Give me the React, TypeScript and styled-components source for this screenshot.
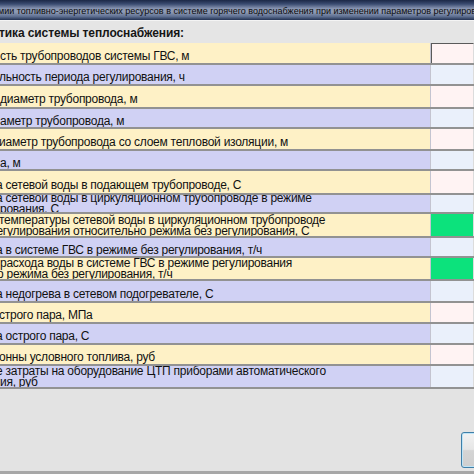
import React from "react";
import styled, { createGlobalStyle } from "styled-components";

const Global = createGlobalStyle`
  html, body { margin: 0; padding: 0; background: #e3e3e3; overflow: hidden; }
  #root { width: 474px; height: 474px; }
`;

const Window = styled.div`
  width: 474px;
  height: 474px;
  display: flex;
  flex-direction: column;
  overflow: hidden;
  font-family: "Liberation Sans", Arial, sans-serif;
  background: #e3e3e3;
`;

const TitleBar = styled.div`
  height: 20px;
  flex: none;
  display: flex;
  align-items: center;
  white-space: nowrap;
  overflow: hidden;
  font-size: 9px;
  color: #0c0c0c;
  background: linear-gradient(
    180deg,
    #1c2846 0%,
    #3a4b70 20%,
    #8693b0 42%,
    #909cb6 60%,
    #5f7092 82%,
    #223152 100%
  );
`;

const TitleText = styled.span`
  text-indent: -2px;
  display: block;
  padding-top: 1px;
`;

const Header = styled.div`
  height: 23px;
  flex: none;
  border-top: 1px solid #f4f4f4;
  background: #e5e5e5;
  display: flex;
  align-items: center;
  font-size: 12px;
  font-weight: bold;
  letter-spacing: -0.1px;
  color: #161616;
  white-space: nowrap;
  padding-top: 1px;
  box-sizing: border-box;
`;

const Table = styled.div`
  display: flex;
  flex-direction: column;
  flex: none;
`;

const Row = styled.div<{ $h: number; $tone: "y" | "b" }>`
  height: ${(p) => p.$h}px;
  box-sizing: border-box;
  display: grid;
  grid-template-columns: 431px 1fr;
  border-bottom: 2px solid #929292;
  background: ${(p) => (p.$tone === "y" ? "#fef1c6" : "#d0d1f4")};
`;

const Label = styled.div<{ $multi: boolean }>`
  display: flex;
  flex-direction: column;
  justify-content: center;
  overflow: hidden;
  font-size: 12px;
  letter-spacing: -0.25px;
  color: #111;
  white-space: nowrap;
  border-right: 1px solid #c4c4d0;
  padding-top: ${(p) => (p.$multi ? 1 : 5)}px;
  line-height: ${(p) => (p.$multi ? 11 : 12)}px;
  box-sizing: border-box;
`;

const Line = styled.span<{ $indent: number }>`
  display: block;
  text-indent: ${(p) => p.$indent}px;
`;

const Cell = styled.div<{ $tone: "y" | "b"; $green?: boolean; $first?: boolean }>`
  background: ${(p) =>
    p.$green ? "#0ce27c" : p.$tone === "y" ? "#fff3f3" : "#eaf0fb"};
  border-top: ${(p) => (p.$first ? "1px solid #5a5a5a" : "none")};
  border-left: ${(p) => (p.$first ? "1px solid #5a5a5a" : "none")};
  border-right: 1px solid #dcdcdc;
`;

const Footer = styled.div`
  flex: 1;
  display: flex;
  justify-content: flex-end;
  align-items: flex-end;
  padding-bottom: 3px;
  border-bottom: 3px solid #a7a7a7;
`;

const Button = styled.button`
  width: 80px;
  height: 36px;
  margin-right: -67px;
  border: 1px solid #3f7fa8;
  border-radius: 3px;
  background: linear-gradient(180deg, #f2f2f2 0%, #e6e6e6 48%, #d4d4d4 52%, #cfcfcf 100%);
  box-shadow: inset 0 0 0 1px #bfe4f6;
`;

type RowData = {
  h: number;
  lines: [string, number][];
  green?: boolean;
};

const rows: RowData[] = [
  { h: 22, lines: [["сть трубопроводов системы ГВС, м", 0]] },
  { h: 21, lines: [["льность периода регулирования, ч", -1]] },
  { h: 23, lines: [["диаметр трубопровода, м", 0]] },
  { h: 20, lines: [["аметр трубопровода, м", 0]] },
  { h: 22, lines: [["иаметр трубопровода со слоем тепловой изоляции, м", -1]] },
  { h: 20, lines: [["а, м", 0]] },
  { h: 24, lines: [["а сетевой воды в подающем трубопроводе, С", -4]] },
  {
    h: 19,
    lines: [
      ["а сетевой воды в циркуляционном трубопроводе в режиме", -4],
      ["рования, С", 0],
    ],
  },
  {
    h: 24,
    green: true,
    lines: [
      ["температуры сетевой воды в циркуляционном трубопроводе", -1],
      ["регулирования относительно режима без регулирования, С", -10],
    ],
  },
  { h: 20, lines: [["а в системе ГВС в режиме без регулирования, т/ч", -4]] },
  {
    h: 23,
    green: true,
    lines: [
      ["расхода воды в системе ГВС в режиме регулирования", 0],
      ["о режима без регулирования, т/ч", -3],
    ],
  },
  { h: 22, lines: [["а недогрева в сетевом подогревателе, С", -4]] },
  { h: 21, lines: [["строго пара, МПа", -1]] },
  { h: 21, lines: [["а острого пара, С", -4]] },
  { h: 21, lines: [["онны условного топлива, руб", -1]] },
  {
    h: 23,
    lines: [
      ["е затраты на оборудование ЦТП приборами автоматического", -4],
      ["ия, руб", 0],
    ],
  },
];

export default function App() {
  return (
    <Window>
      <Global />
      <TitleBar>
        <TitleText>
          мии топливно-энергетических ресурсов в системе горячего водоснабжения при изменении параметров регулирования
        </TitleText>
      </TitleBar>
      <Header>
        <Line $indent={-1}>тика системы теплоснабжения:</Line>
      </Header>
      <Table>
        {rows.map((r, i) => {
          const tone = i % 2 === 0 ? "y" : "b";
          return (
            <Row key={i} $h={r.h} $tone={tone}>
              <Label $multi={r.lines.length > 1}>
                {r.lines.map(([t, ind], j) => (
                  <Line key={j} $indent={ind}>
                    {t}
                  </Line>
                ))}
              </Label>
              <Cell $tone={tone} $green={r.green} $first={i === 0} />
            </Row>
          );
        })}
      </Table>
      <Footer>
        <Button aria-label="OK" />
      </Footer>
    </Window>
  );
}
